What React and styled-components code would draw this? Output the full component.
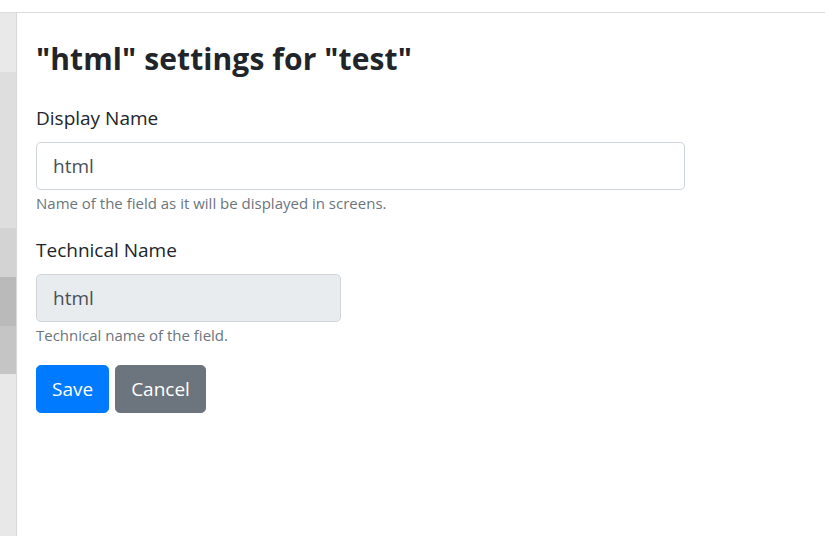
import styled, { createGlobalStyle } from 'styled-components'

const GlobalStyle = createGlobalStyle`
    html, body {
        margin: 0;
        padding: 0;
        background: #ffffff;
    }
    body {
        font-family: "Segoe UI", "Open Sans", sans-serif;
        color: #212529;
        font-size: 16px;
    }
`

const Page = styled.div`
    display: flex;
    flex-direction: column;
    width: 825px;
    height: 536px;
    overflow: hidden;
`

const TopBar = styled.div`
    height: 12px;
    flex-shrink: 0;
    border-bottom: 1px solid #dcdcdc;
`

const Body = styled.div`
    display: flex;
    flex: 1;
`

const Sidebar = styled.div`
    width: 16px;
    display: flex;
    flex-direction: column;
    border-right: 1px solid #d8d8d8;
    background: #e8e8e8;
`

const SidebarStripe = styled.div`
    height: ${(p) => p.size}px;
    background: ${(p) => p.color};
`

const Content = styled.div`
    flex: 1;
    padding: 27px 19px;
`

const Title = styled.h2`
    margin: 0 0 16px;
    font-size: 30px;
    font-weight: 700;
    line-height: 38px;
    letter-spacing: 0.1px;
`

const FormGroup = styled.div`
    margin-bottom: 14px;
`

const Label = styled.label`
    display: block;
    padding: 9px 0;
    font-size: 19px;
    line-height: 30px;
`

const Input = styled.input`
    display: block;
    box-sizing: border-box;
    width: ${(p) => p.width}px;
    height: 48px;
    padding: 8px 16px;
    font-family: inherit;
    font-size: 19px;
    color: #495057;
    background: ${(p) => (p.readOnly ? '#e9ecef' : '#ffffff')};
    border: 1px solid #ced4da;
    border-radius: 4.8px;
    outline: none;
`

const HelpText = styled.small`
    display: block;
    margin-top: 5px;
    font-size: 15px;
    line-height: 17px;
    color: #6c757d;
`

const Actions = styled.div`
    display: flex;
    gap: 6px;
    margin-top: 21px;
`

const Button = styled.button`
    height: 48px;
    padding: 0 15px;
    font-family: inherit;
    font-size: 19px;
    color: #ffffff;
    background: ${(p) => (p.variant === 'secondary' ? '#6c757d' : '#007bff')};
    border: 1px solid ${(p) => (p.variant === 'secondary' ? '#6c757d' : '#007bff')};
    border-radius: 4.8px;
    cursor: pointer;
`

const stripes = [
    { size: 59, color: '#e9e9e9' },
    { size: 156, color: '#dedede' },
    { size: 49, color: '#d3d3d3' },
    { size: 49, color: '#bababa' },
    { size: 48, color: '#c5c5c5' },
]

const App = () => {
    return (
        <Page>
            <GlobalStyle />
            <TopBar />
            <Body>
                <Sidebar>
                    {stripes.map((s, i) => (
                        <SidebarStripe key={i} size={s.size} color={s.color} />
                    ))}
                </Sidebar>
                <Content>
                    <Title>"html" settings for "test"</Title>
                    <FormGroup>
                        <Label htmlFor="displayName">Display Name</Label>
                        <Input id="displayName" width={649} defaultValue="html" />
                        <HelpText>Name of the field as it will be displayed in screens.</HelpText>
                    </FormGroup>
                    <FormGroup>
                        <Label htmlFor="technicalName">Technical Name</Label>
                        <Input id="technicalName" width={305} defaultValue="html" readOnly />
                        <HelpText>Technical name of the field.</HelpText>
                    </FormGroup>
                    <Actions>
                        <Button>Save</Button>
                        <Button variant="secondary">Cancel</Button>
                    </Actions>
                </Content>
            </Body>
        </Page>
    )
}

export default App
